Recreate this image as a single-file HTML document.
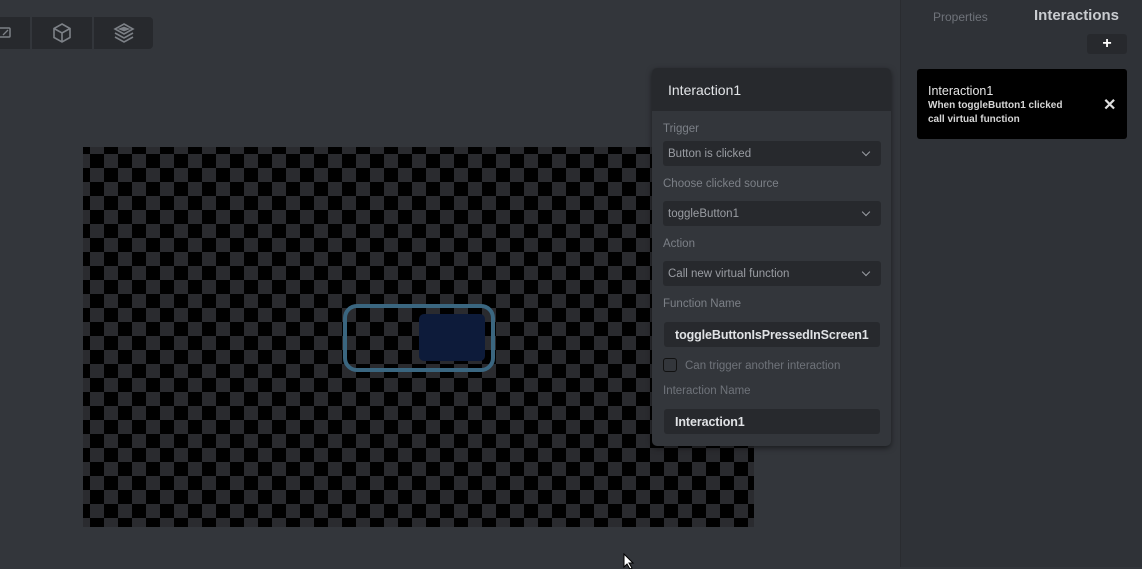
<!DOCTYPE html><html><head><style>
*{margin:0;padding:0;box-sizing:border-box}
body{width:1142px;height:567px;background:#33363b;font-family:"Liberation Sans",sans-serif;position:relative;overflow:hidden}
.abs{position:absolute}
.checker{left:83px;top:147px;width:671px;height:380px;background-color:#000;background-image:conic-gradient(#2a2b2f 25%,transparent 0 50%,#2a2b2f 0 75%,transparent 0);background-size:28px 28px;background-position:-7px -7px}
.lbl{position:absolute;left:11px;font-size:11.5px;color:#7c8087}
.sel{position:absolute;left:11px;width:218px;height:25px;background:#27292d;border-radius:3px;font-size:11.5px;color:#9a9da3;padding:7px 0 0 5px}
.sel:after{content:"";position:absolute;right:12px;top:8px;width:5px;height:5px;border-right:1.5px solid #9a9da3;border-bottom:1.5px solid #9a9da3;transform:rotate(45deg)}
.inp{position:absolute;left:12px;width:216px;height:25px;background:#27292d;border-radius:3px;font-size:12.5px;color:#e0e2e5;padding:6px 0 0 11px;font-weight:bold;letter-spacing:-0.1px}
</style></head><body>
<div class="abs" style="left:-10px;top:17px;width:163px;height:32px;background:#27292d;border-radius:4px"></div>
<div class="abs" style="left:30px;top:17px;width:2px;height:32px;background:#33363b"></div>
<div class="abs" style="left:92px;top:17px;width:2px;height:32px;background:#33363b"></div>
<svg class="abs" style="left:0;top:25px" width="12" height="16"><rect x="-4" y="3" width="14" height="9" rx="1" fill="none" stroke="#7d8187" stroke-width="1.5"/><path d="M3 10l5-5" stroke="#7d8187" stroke-width="1.3"/></svg>
<svg class="abs" style="left:51px;top:22px" width="22" height="22" viewBox="0 0 22 22" fill="none" stroke="#7d8187" stroke-width="1.6"><path d="M11 2l8 4.5v9L11 20l-8-4.5v-9z M3 6.5L11 11l8-4.5 M11 11v9"/></svg>
<svg class="abs" style="left:113px;top:22px" width="22" height="22" viewBox="0 0 22 22" fill="none" stroke="#7d8187" stroke-width="1.6"><path d="M11 2l9 5-9 5-9-5z"/><path d="M2 11l9 5 9-5 M2 15l9 5 9-5"/><path d="M11 5.5l4 1.5-4 1.5-4-1.5z" fill="#7d8187"/></svg>
<div class="abs checker"></div>
<div class="abs" style="left:343px;top:304px;width:152px;height:68px;border:4px solid #3a6680;border-radius:14px"></div>
<div class="abs" style="left:419px;top:314px;width:66px;height:47px;background:#0d1b3a;border-radius:5px"></div>
<div class="abs" style="left:900px;top:0;width:242px;height:567px;background:#2f3237;border-left:1px solid #2a2c30"></div>
<div class="abs" style="left:933px;top:10px;font-size:12px;color:#6f737a">Properties</div>
<div class="abs" style="left:1034px;top:7px;font-size:15px;color:#c9ccd0;font-weight:bold">Interactions</div>
<div class="abs" style="left:1087px;top:34px;width:40px;height:20px;background:#27292d;border-radius:3px;color:#fff;font-weight:bold;font-size:16px;text-align:center;line-height:20px">+</div>
<div class="abs" style="left:917px;top:69px;width:210px;height:70px;background:#000;border-radius:3px"></div>
<div class="abs" style="left:928px;top:84px;font-size:12.5px;color:#e6e6e6">Interaction1</div>
<div class="abs" style="left:928px;top:99px;font-size:10px;color:#d6d6d6;line-height:14px;font-weight:bold">When toggleButton1 clicked<br>call virtual function</div>
<div class="abs" style="left:1103px;top:95px;font-size:16px;color:#ddd;font-weight:bold">✕</div>
<div class="abs" style="left:652px;top:68px;width:239px;height:378px;background:#33363b;border-radius:5px;box-shadow:0 2px 6px rgba(0,0,0,.5);overflow:hidden">
<div style="height:43px;background:#27292d;color:#e3e5e8;font-size:14px;padding:14px 0 0 16px">Interaction1</div>
<div class="lbl" style="top:55px">Trigger</div>
<div class="sel" style="top:73px">Button is clicked</div>
<div class="lbl" style="top:110px">Choose clicked source</div>
<div class="sel" style="top:133px">toggleButton1</div>
<div class="lbl" style="top:170px">Action</div>
<div class="sel" style="top:193px">Call new virtual function</div>
<div class="lbl" style="top:230px">Function Name</div>
<div class="inp" style="top:254px">toggleButtonIsPressedInScreen1</div>
<div class="abs" style="left:11px;top:290px;width:14px;height:14px;border:1.5px solid #111;border-radius:3px"></div>
<div class="lbl" style="left:33px;top:292px;color:#6f737a">Can trigger another interaction</div>
<div class="lbl" style="top:317px;color:#6f737a">Interaction Name</div>
<div class="inp" style="top:341px">Interaction1</div>
</div>
<svg class="abs" style="left:623px;top:553px" width="12" height="16"><path d="M1 1v13l3-3 3 5 2-1-3-5h4z" fill="#fff" stroke="#000"/></svg>
</body></html>
